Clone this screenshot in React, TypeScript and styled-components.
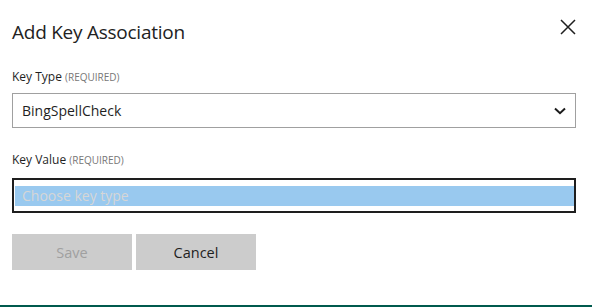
import styled, { createGlobalStyle } from 'styled-components'

const GlobalStyle = createGlobalStyle`
    html, body {
        margin: 0;
        padding: 0;
        background: #fff;
    }
    body {
        font-family: 'Open Sans', 'Noto Sans', sans-serif;
        color: #1f1f1f;
    }
`

function CloseIcon() {
    return (
        <svg width='16' height='16' viewBox='0 0 16 16'>
            <path d='M1 1 L15 15 M15 1 L1 15' stroke='#1f1f1f' strokeWidth='1.5' fill='none' />
        </svg>
    )
}

function Chevron() {
    return (
        <svg width='12' height='8' viewBox='0 0 12 8'>
            <path d='M1 1.5 L6 6.2 L11 1.5' stroke='#1a1a1a' strokeWidth='2' fill='none' />
        </svg>
    )
}

export default function App() {
    return (
        <>
            <GlobalStyle />
            <Dialog>
                <Header>
                    <Title>Add Key Association</Title>
                    <CloseButton aria-label='close'>
                        <CloseIcon />
                    </CloseButton>
                </Header>

                <Label $top={23}>
                    Key Type <Hint>(REQUIRED)</Hint>
                </Label>
                <Select>
                    <span>BingSpellCheck</span>
                    <Chevron />
                </Select>

                <Label $top={24}>
                    Key Value <Hint>(REQUIRED)</Hint>
                </Label>
                <ValueBox>
                    <Highlight>Choose key type</Highlight>
                </ValueBox>

                <Buttons>
                    <Button disabled>Save</Button>
                    <Button>Cancel</Button>
                </Buttons>
            </Dialog>
        </>
    )
}

const Dialog = styled.div`
    width: 592px;
    height: 307px;
    box-sizing: border-box;
    padding: 0 16px 0 12px;
    border-bottom: 2px solid #005a4e;
    display: flex;
    flex-direction: column;
`

const Header = styled.div`
    display: flex;
    justify-content: space-between;
    align-items: flex-start;
`

const Title = styled.h1`
    margin: 18px 0 0;
    font-size: 19px;
    letter-spacing: -0.25px;
    line-height: 28px;
    font-weight: 400;
    color: #222;
`

const CloseButton = styled.button`
    margin: 19px 0 0;
    padding: 0;
    border: none;
    background: none;
    width: 16px;
    height: 16px;
    cursor: pointer;
    svg {
        display: block;
    }
`

const Label = styled.div<{ $top: number }>`
    margin-top: ${(p) => p.$top}px;
    font-size: 12px;
    line-height: 16px;
    color: #1f1f1f;
`

const Hint = styled.span`
    font-size: 10px;
    color: #777;
`

const Select = styled.div`
    margin-top: 8px;
    height: 35px;
    box-sizing: border-box;
    border: 1px solid #a0a0a0;
    padding: 0 9px 0 9px;
    display: flex;
    align-items: center;
    justify-content: space-between;
    font-size: 14px;
    color: #1f1f1f;
`

const ValueBox = styled.div`
    margin-top: 10px;
    height: 35px;
    box-sizing: border-box;
    border: 2px solid #1e1e1e;
    padding: 6px 0 0 1px;
`

const Highlight = styled.div`
    height: 20px;
    background: #99c9ef;
    padding-left: 7px;
    font-size: 14px;
    line-height: 20px;
    color: #d6d6d6;
`

const Buttons = styled.div`
    margin-top: 21px;
    display: flex;
    gap: 4px;
`

const Button = styled.button`
    width: 120px;
    height: 36px;
    border: none;
    margin: 0;
    padding: 0;
    background: #cccccc;
    font-family: inherit;
    font-size: 14.5px;
    color: #1f1f1f;
    cursor: pointer;
    &:disabled {
        color: #a0a0a0;
        cursor: default;
    }
`
